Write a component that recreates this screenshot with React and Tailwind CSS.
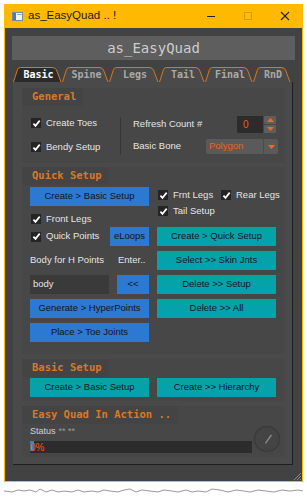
import React from "react";

const SANS = { fontFamily: '"Liberation Sans", Arial, sans-serif' };
const MONO = { fontFamily: '"DejaVu Sans Mono", "Liberation Mono", monospace' };

const Check = () => (
  <span className="w-[10px] h-[10px] bg-[#242424] flex items-center justify-center shrink-0">
    <svg width="9" height="9" viewBox="0 0 9 9">
      <path d="M1.4 4.6 L3.5 6.9 L7.7 1.6" stroke="#ffffff" strokeWidth="1.7" fill="none" />
    </svg>
  </span>
);

const CB = ({ label, className = "" }) => (
  <div className={"flex items-center gap-[5px] h-[16px] " + className}>
    <Check />
    <span>{label}</span>
  </div>
);

const Btn = ({ children, teal, className = "" }) => (
  <div
    className={
      "h-[19px] flex items-center justify-center text-[#121418] " +
      (teal ? "bg-[#05a3a9] " : "bg-[#2c79d3] ") +
      className
    }
  >
    {children}
  </div>
);

const Title = ({ children }) => (
  <div className="flex">
    <div
      className="h-[18px] pl-[10px] pr-[7px] flex items-center bg-[#444444] text-[#d8792a] font-bold text-[10.5px]"
      style={MONO}
    >
      {children}
    </div>
  </div>
);

const Tri = ({ up }) => (
  <svg width="7" height="4" viewBox="0 0 7 4">
    {up ? <path d="M0 4 L3.5 0 L7 4 Z" fill="#f06a1e" /> : <path d="M0 0 L3.5 4 L7 0 Z" fill="#f06a1e" />}
  </svg>
);

const Tab = ({ label, w, active }) => {
  const d = `M0.5 15 L4.5 2.5 Q5.2 0.5 7.5 0.5 L ${w - 10} 0.5 Q ${w - 6.5} 0.5 ${w - 5.5} 3 L ${w - 1} 15`;
  return (
    <div className="relative h-[15px] flex items-center justify-center pl-[2px]" style={{ width: w }}>
      <svg className="absolute left-0 top-0" width={w} height="15" viewBox={`0 0 ${w} 15`}>
        <path d={d} fill={active ? "#2a2a2a" : "#4a4a4a"} stroke="#d27a22" strokeWidth="1" />
      </svg>
      <span
        className={"relative font-bold text-[10px] " + (active ? "text-white" : "text-[#a9a9a9]")}
        style={MONO}
      >
        {label}
      </span>
    </div>
  );
};

export default function App() {
  return (
    <div className="w-[307px] h-[500px] bg-white relative overflow-hidden" style={SANS}>
      {/* window */}
      <div className="absolute left-[4px] top-[4px] w-[299px] bg-[#ffb900] px-[1px] pb-[1px]">
        {/* title bar */}
        <div className="h-[24px] flex items-center">
          <svg className="ml-[7px]" width="11" height="9" viewBox="0 0 11 9">
            <rect x="0.5" y="0.5" width="10" height="8" fill="#f4f4f4" stroke="#7a8a9a" />
            <rect x="1" y="1" width="3" height="7" fill="#3d7cc9" />
            <rect x="5" y="2" width="5" height="1" fill="#9ab" />
          </svg>
          <span className="ml-[5px] text-[11.5px] text-[#1a1a1a]">as_EasyQuad .. !</span>
          <div className="ml-auto flex items-center">
            <svg width="10" height="10" viewBox="0 0 10 10" className="mr-[27px]">
              <path d="M1 5.5 H9" stroke="#222" strokeWidth="1" />
            </svg>
            <svg width="10" height="10" viewBox="0 0 10 10" className="mr-[27px]">
              <rect x="1.5" y="1.5" width="7" height="7" fill="none" stroke="#d79c00" strokeWidth="1" />
            </svg>
            <svg width="10" height="10" viewBox="0 0 10 10" className="mr-[12px]">
              <path d="M1 1 L9 9 M9 1 L1 9" stroke="#222" strokeWidth="1.1" />
            </svg>
          </div>
        </div>
        {/* body */}
        <div className="relative h-[453px] bg-[#424242] pt-[8px]">
          <div
            className="ml-[7px] w-[283px] h-[24px] bg-[#5e5e5e] flex items-center justify-center text-[14px] text-[#cdcdcd]"
            style={MONO}
          >
            as_EasyQuad
          </div>
          {/* tabs */}
          <div className="ml-[8px] mt-[7px] flex">
            <Tab label="Basic" w={49} active />
            <Tab label="Spine" w={47} />
            <Tab label="Legs" w={50} />
            <Tab label="Tail" w={46} />
            <Tab label="Final" w={48} />
            <Tab label="RnD" w={38} />
          </div>
          {/* pane */}
          <div className="ml-[8px] w-[280px] h-[383px] bg-[#4a4a4a] border-r border-b border-[#1e1e1e] pl-[9px] pt-[6px] text-[9.5px] text-[#e4e4e4]">
            {/* General */}
            <div className="w-[263px] h-[75px] bg-[#474747]">
              <Title>General</Title>
              <div className="flex">
                <div className="w-[98px] pl-[9px] pt-[9px] flex flex-col gap-[8px]">
                  <CB label="Create Toes" />
                  <CB label="Bendy Setup" />
                </div>
                <div className="w-px h-[38px] mt-[11px] bg-[#363636]" />
                <div className="ml-[12px] pt-[10px] flex flex-col">
                  <div className="flex items-center h-[17px]">
                    <span className="w-[104px]">Refresh Count #</span>
                    <div className="w-[26px] h-[17px] bg-[#2c2c2c] flex items-center pl-[6px] text-[#e85e1c] text-[10px]">
                      0
                    </div>
                    <div className="ml-[1px] flex flex-col gap-[1px]">
                      <div className="w-[12px] h-[8px] bg-[#5e5e5e] rounded-[1px] flex items-center justify-center">
                        <Tri up />
                      </div>
                      <div className="w-[12px] h-[8px] bg-[#5e5e5e] rounded-[1px] flex items-center justify-center">
                        <Tri />
                      </div>
                    </div>
                  </div>
                  <div className="flex items-center h-[15px] mt-[6px]">
                    <span className="w-[73px]">Basic Bone</span>
                    <div className="w-[72px] h-[15px] bg-[#5a5a5a] rounded-[2px] flex items-center">
                      <span className="flex-1 pl-[3px] text-[#ee5f1a] text-[9.5px]">Polygon</span>
                      <div className="w-[15px] h-full border-l border-[#4c4c4c] flex items-center justify-center">
                        <Tri />
                      </div>
                    </div>
                  </div>
                </div>
              </div>
            </div>

            {/* Quick Setup */}
            <div className="w-[263px] mt-[4px] bg-[#474747] pb-[12px]">
              <Title>Quick Setup</Title>
              <div className="pl-[8px]">
                <div className="flex mt-[2px]">
                  <div className="w-[119px]">
                    <Btn>Create &gt; Basic Setup</Btn>
                    <CB className="mt-[5px] pl-[1px] h-[15px]" label="Front Legs" />
                  </div>
                  <div className="ml-[8px] pl-[1px]">
                    <div className="flex">
                      <CB className="w-[63px]" label="Frnt Legs" />
                      <CB label="Rear Legs" />
                    </div>
                    <CB label="Tail Setup" />
                  </div>
                </div>
                <div className="flex">
                  <div className="w-[119px] flex items-center">
                    <CB className="flex-1 pl-[1px]" label="Quick Points" />
                    <Btn className="w-[39px]">eLoops</Btn>
                  </div>
                  <Btn teal className="w-[119px] ml-[8px]">
                    Create &gt; Quick Setup
                  </Btn>
                </div>
                <div className="flex mt-[5px]">
                  <div className="w-[119px] flex items-center">
                    <span className="w-[88px]">Body for H Points</span>
                    <span>Enter..</span>
                  </div>
                  <Btn teal className="w-[119px] ml-[8px]">
                    Select &gt;&gt; Skin Jnts
                  </Btn>
                </div>
                <div className="flex mt-[5px]">
                  <div className="w-[119px] flex items-center">
                    <div className="w-[79px] h-[19px] bg-[#3a3a3a] flex items-center pl-[3px]">body</div>
                    <Btn className="w-[32px] ml-[8px]">&lt;&lt;</Btn>
                  </div>
                  <Btn teal className="w-[119px] ml-[8px]">
                    Delete &gt;&gt; Setup
                  </Btn>
                </div>
                <div className="flex mt-[5px]">
                  <Btn className="w-[119px]">Generate &gt; HyperPoints</Btn>
                  <Btn teal className="w-[119px] ml-[8px]">
                    Delete &gt;&gt; All
                  </Btn>
                </div>
                <div className="flex mt-[5px]">
                  <Btn className="w-[119px]">Place &gt; Toe Joints</Btn>
                </div>
              </div>
            </div>

            {/* Basic Setup */}
            <div className="w-[263px] mt-[5px] bg-[#474747] pb-[4px]">
              <Title>Basic Setup</Title>
              <div className="pl-[8px] flex mt-[1px]">
                <Btn teal className="w-[119px]">
                  Create &gt; Basic Setup
                </Btn>
                <Btn teal className="w-[119px] ml-[8px]">
                  Create &gt;&gt; Hierarchy
                </Btn>
              </div>
            </div>

            {/* Easy Quad In Action */}
            <div className="w-[263px] mt-[5px] bg-[#474747] pb-[4px]">
              <Title>Easy Quad In Action ..</Title>
              <div className="pl-[8px] flex">
                <div className="w-[222px]">
                  <div className="h-[12px] mt-[2px] flex items-center text-[9px] text-[#d2d2d2]">
                    Status <span className="ml-[3px] text-[#9a9a9a]">** **</span>
                  </div>
                  <div className="h-[12px] mt-[3px] bg-[#2c2c2c] flex items-center text-[10px] text-[#e8601e]">
                    <span className="relative">
                      <span className="absolute left-0 top-[1px] w-[4px] h-[10px] bg-[#3a7fd2]" />
                      <span className="relative">0%</span>
                    </span>
                  </div>
                </div>
                <svg className="ml-[1px] mt-[1px]" width="28" height="28" viewBox="0 0 28 28">
                  <circle cx="14" cy="14" r="12.5" fill="#444444" stroke="#3b3b3b" strokeWidth="1.5" />
                  <path d="M12.4 18.3 L18.4 10" stroke="#8a8a8a" strokeWidth="1.4" />
                </svg>
              </div>
            </div>
          </div>
          {/* grip */}
          <svg className="absolute right-[1px] bottom-[1px]" width="8" height="8" viewBox="0 0 8 8">
            <path d="M8 1 L1 8 M8 4 L4 8 M8 7 L7 8" stroke="#8a8a8a" strokeWidth="1" />
          </svg>
        </div>
      </div>
      {/* torn edge */}
      <svg className="absolute left-0 top-[484px]" width="307" height="16" viewBox="0 0 307 16">
        <path
          d="M4 7 L12 8 L18 6 L24 7 L30 6 L36 8 L40 5 L46 8 L52 6 L58 8 L64 7 L72 8 L78 6 L84 8 L92 7 L98 8 L104 6 L110 7 L118 8 L124 6 L130 5 L136 8 L142 6 L150 7 L158 8 L164 6 L172 7 L178 8 L186 6 L192 8 L198 7 L206 8 L212 5 L220 6 L228 8 L236 6 L244 7 L250 8 L258 6 L266 7 L274 8 L282 6 L290 7 L298 6 L303 7"
          fill="none"
          stroke="#9a9a9a"
          strokeWidth="1"
        />
      </svg>
    </div>
  );
}
